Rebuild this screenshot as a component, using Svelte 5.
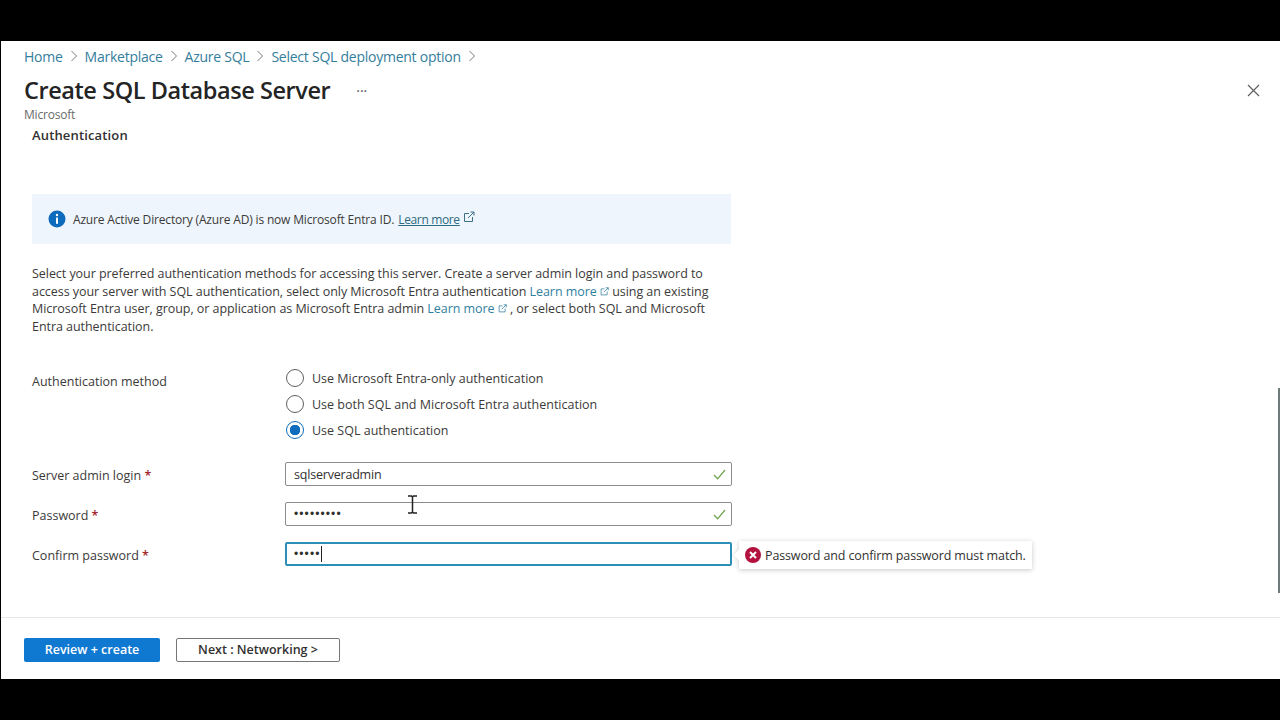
<script lang="ts">
	const crumbs = ['Home', 'Marketplace', 'Azure SQL', 'Select SQL deployment option'];

	const methods = [
		{ label: 'Use Microsoft Entra-only authentication', checked: false },
		{ label: 'Use both SQL and Microsoft Entra authentication', checked: false },
		{ label: 'Use SQL authentication', checked: true }
	];
</script>

{#snippet extLink(size)}
	<svg class="ext" width={size} height={size} viewBox="0 0 12 12" fill="none" stroke="currentColor" stroke-width="1">
		<path d="M6 2.5H1.5v8h8V6" />
		<path d="M5 7l6-6M7.5 1H11v3.5" />
	</svg>
{/snippet}

{#snippet check()}
	<svg class="check" width="13" height="11" viewBox="0 0 13 11" fill="none" stroke="#6fa650" stroke-width="1.3">
		<path d="M1 6l3.6 3.8L12 1" />
	</svg>
{/snippet}

<div class="screen">
	<div class="page">
		<header class="head">
			<nav class="crumbs">
				{#each crumbs as crumb}
					<a href="#top">{crumb}</a>
					<svg width="8" height="12" viewBox="0 0 8 12" fill="none" stroke="#7a7a7a" stroke-width="1">
						<path d="M1.5 1l5 5-5 5" />
					</svg>
				{/each}
			</nav>
			<div class="title-row">
				<h1>Create SQL Database Server</h1>
				<span class="more">···</span>
				<svg class="close" width="13" height="13" viewBox="0 0 13 13" stroke="#5f5f5f" stroke-width="1.2">
					<path d="M1 1l11 11M12 1L1 12" />
				</svg>
			</div>
			<div class="publisher">Microsoft</div>
		</header>

		<main class="body">
			<h2>Authentication</h2>

			<div class="banner">
				<svg width="18" height="18" viewBox="0 0 18 18">
					<circle cx="9" cy="9" r="8.5" fill="#0f6cbd" />
					<rect x="8" y="7.6" width="2" height="6.2" fill="#fff" />
					<circle cx="9" cy="5" r="1.2" fill="#fff" />
				</svg>
				<span>Azure Active Directory (Azure AD) is now Microsoft Entra ID.</span>
				<a class="banner-link" href="#top">Learn more</a>
				<span class="banner-ext">{@render extLink(12)}</span>
			</div>

			<p class="intro">
				Select your preferred authentication methods for accessing this server. Create a server admin login and password to<br />
				access your server with SQL authentication, select only Microsoft Entra authentication
				<a href="#top">Learn more {@render extLink(9)}</a> using an existing<br />
				Microsoft Entra user, group, or application as Microsoft Entra admin
				<a href="#top">Learn more {@render extLink(9)}</a> , or select both SQL and Microsoft<br />
				Entra authentication.
			</p>

			<div class="form">
				<div class="method-label">Authentication method</div>
				<div class="radios">
					{#each methods as method}
						<div class="radio-row">
							<span class="radio" class:checked={method.checked}></span>
							<span>{method.label}</span>
						</div>
					{/each}
				</div>

				<div class="label">Server admin login <b>*</b></div>
				<div class="input valid">
					<span class="value">sqlserveradmin</span>
					{@render check()}
				</div>

				<div class="label">Password <b>*</b></div>
				<div class="input valid">
					<span class="dots">•••••••••</span>
					{@render check()}
					<svg class="ibeam" width="11" height="19" viewBox="0 0 11 19" fill="none" stroke="#222" stroke-width="1.5">
						<path d="M1 1h3.5l1 1 1-1H10M5.5 2v15M1 18h3.5l1-1 1 1H10" />
					</svg>
				</div>

				<div class="label">Confirm password <b>*</b></div>
				<div class="input focused">
					<span class="dots">•••••</span><span class="caret"></span>
					<div class="tip">
						<svg width="16" height="16" viewBox="0 0 16 16">
							<circle cx="8" cy="8" r="8" fill="#b3123f" />
							<path d="M5 5l6 6M11 5l-6 6" stroke="#fff" stroke-width="2" />
						</svg>
						<span>Password and confirm password must match.</span>
					</div>
				</div>
			</div>
		</main>

		<footer class="foot">
			<button class="primary">Review + create</button>
			<button class="secondary">Next : Networking &gt;</button>
		</footer>

		<div class="scrollbar"></div>
	</div>
</div>

<style>
	:global(body) {
		margin: 0;
		background: #000;
	}

	.screen {
		width: 1280px;
		height: 720px;
		padding: 41px 0;
		box-sizing: border-box;
		background: #000;
		font-family: 'Open Sans', 'Noto Sans', sans-serif;
		color: #3b3a39;
		font-size: 12.5px;
		overflow: hidden;
	}

	.page {
		position: relative;
		height: 638px;
		margin-left: 1px;
		background: #fff;
		display: flex;
		flex-direction: column;
	}

	a {
		color: #2f7f9f;
		text-decoration: none;
	}

	.head {
		padding: 6px 20px 0 23px;
	}

	.crumbs {
		display: flex;
		align-items: center;
		gap: 7px;
		height: 18px;
		font-size: 14px;
	}

	.crumbs a {
		color: #347d9c;
		letter-spacing: -0.25px;
	}

	.title-row {
		display: flex;
		align-items: center;
		height: 32px;
		margin-top: 9px;
	}

	h1 {
		margin: 0;
		font-size: 23.5px;
		font-weight: 600;
		color: #242424;
		letter-spacing: -0.43px;
	}

	.more {
		margin-left: 26px;
		font-size: 14px;
		color: #555;
	}

	.close {
		margin-left: auto;
		margin-right: 0;
	}

	.publisher {
		margin-top: 1px;
		font-size: 12px;
		line-height: 16px;
		color: #6a6a6a;
		letter-spacing: -0.2px;
	}

	.body {
		flex: 1;
		padding: 3px 0 0 31px;
		width: 699px;
	}

	h2 {
		margin: 0;
		font-size: 13px;
		line-height: 18px;
		font-weight: 600;
		color: #323130;
		letter-spacing: 0.15px;
	}

	.banner {
		display: flex;
		align-items: center;
		height: 50px;
		margin-top: 50px;
		padding-left: 16px;
		background: #eef5fc;
		font-size: 12px;
	}

	.banner > span:first-of-type {
		margin-left: 7px;
		letter-spacing: -0.17px;
	}

	.banner-link {
		margin-left: 4px;
		color: #2d6b80;
		text-decoration: underline;
		letter-spacing: -0.35px;
	}

	.banner-ext {
		display: flex;
		margin: -4px 0 0 3px;
		color: #3f7186;
	}

	.intro {
		margin: 21px 0 0;
		line-height: 17.6px;
		white-space: nowrap;
		letter-spacing: -0.05px;
	}

	.intro .ext {
		color: #2f7f9f;
	}

	.form {
		display: grid;
		grid-template-columns: 253px 447px;
		row-gap: 16px;
		margin-top: 34px;
		align-items: center;
	}

	.method-label {
		align-self: start;
		padding-top: 4px;
	}

	.label {
		padding-top: 2px;
	}

	.label b {
		font-weight: 600;
		color: #a4262c;
	}

	.radios {
		display: flex;
		flex-direction: column;
		gap: 8px;
		margin-bottom: 7px;
	}

	.radio-row {
		display: flex;
		align-items: center;
		gap: 8px;
		height: 18px;
		padding-left: 1px;
	}

	.radio {
		width: 16px;
		height: 16px;
		border: 1px solid #5f5f5f;
		border-radius: 50%;
		background: #fff;
	}

	.radio.checked {
		border-color: #0f6cbd;
		background: radial-gradient(circle, #0f6cbd 0 5px, #fff 5.5px);
	}

	.input {
		position: relative;
		display: flex;
		align-items: center;
		height: 24px;
		padding: 0 8px;
		box-sizing: border-box;
		border: 1px solid #8a8886;
		border-radius: 2px;
		background: #fff;
		color: #323130;
	}

	.valid {
		border-color: #8e8a92;
	}

	.focused {
		border: 2px solid #2d8fb5;
		padding: 0 7px;
	}

	.value {
		letter-spacing: -0.2px;
	}

	.dots {
		font-family: 'Liberation Sans', sans-serif;
		font-size: 12px;
		letter-spacing: 1.1px;
	}

	.caret {
		width: 1px;
		height: 16px;
		background: #222;
	}

	.check {
		margin-left: auto;
		margin-right: -3px;
	}

	.ibeam {
		position: absolute;
		left: 121px;
		top: -8px;
	}

	.tip {
		position: absolute;
		left: 452px;
		top: -3px;
		display: flex;
		align-items: center;
		gap: 4px;
		height: 28px;
		padding: 0 6px;
		background: #fff;
		white-space: nowrap;
		letter-spacing: -0.13px;
		box-shadow: 0 1px 5px rgba(0, 0, 0, 0.22);
	}

	.tip::before {
		content: '';
		position: absolute;
		left: -4px;
		top: 10px;
		width: 8px;
		height: 8px;
		background: #fff;
		transform: rotate(45deg);
		box-shadow: -1px 1px 2px rgba(0, 0, 0, 0.08);
	}

	.foot {
		display: flex;
		align-items: center;
		gap: 16px;
		height: 59px;
		padding: 2px 0 0 23px;
		border-top: 1px solid #e6e6e6;
	}

	button {
		height: 24px;
		padding: 0;
		border-radius: 2px;
		font-family: inherit;
		font-size: 12.5px;
		font-weight: 600;
		box-sizing: border-box;
	}

	.primary {
		width: 136px;
		border: 0;
		background: #0f78d0;
		color: #fff;
	}

	.secondary {
		width: 164px;
		border: 1px solid #77757a;
		background: #fff;
		color: #323130;
	}

	.scrollbar {
		position: absolute;
		right: 0;
		top: 347px;
		width: 2px;
		height: 205px;
		background: #6f7a7a;
	}
</style>
